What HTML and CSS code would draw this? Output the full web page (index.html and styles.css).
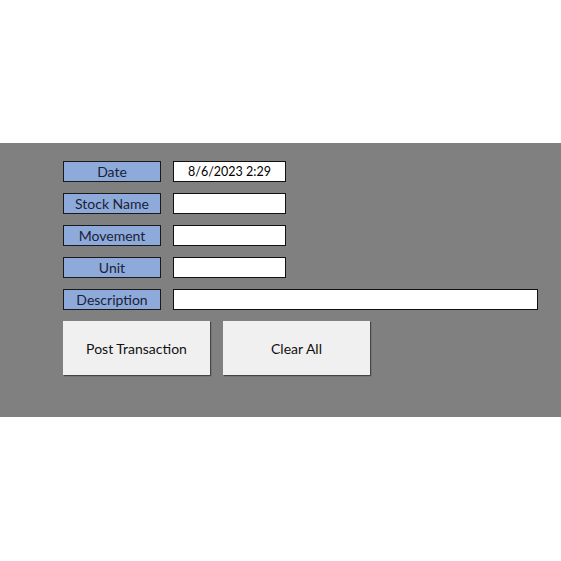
FILE: index.html
```html
<!DOCTYPE html>
<html>
<head>
<meta charset="utf-8">
<link rel="stylesheet" href="styles.css">
</head>
<body>
<div class="top"></div>
<div class="panel">
  <div class="row"><div class="label">Date</div><div class="field">8/6/2023 2:29</div></div>
  <div class="row"><div class="label">Stock Name</div><div class="field"></div></div>
  <div class="row"><div class="label">Movement</div><div class="field"></div></div>
  <div class="row"><div class="label">Unit</div><div class="field"></div></div>
  <div class="row"><div class="label">Description</div><div class="field wide"></div></div>
  <div class="buttons">
    <div class="btn">Post Transaction</div>
    <div class="btn">Clear All</div>
  </div>
</div>
</body>
</html>
```
FILE: styles.css
```css
html, body { margin: 0; padding: 0; background: #fff; }
body { font-family: Lato, "Open Sans", sans-serif; font-size: 14px; }
.top { height: 143px; }
.panel {
  background: #808080;
  height: 274px;
  box-sizing: border-box;
  padding: 18px 0 0 63px;
  display: flex;
  flex-direction: column;
  gap: 11px;
}
.row { display: flex; gap: 12px; height: 21px; }
.label {
  width: 98px; box-sizing: border-box;
  background: #8eaadb;
  border: 1px solid #1a1a1a;
  color: #1a2236;
  display: flex; align-items: center; justify-content: center;
}
.field {
  width: 113px; box-sizing: border-box;
  background: #fff;
  border: 1px solid #111;
  color: #000;
  font-size: 12.5px;
  display: flex; align-items: center; justify-content: center;
}
.field.wide { width: 365px; }
.buttons { display: flex; gap: 13px; }
.btn {
  width: 147px; height: 54px; box-sizing: border-box;
  background: #f0f0f0;
  box-shadow: 1px 1px 1px #444;
  color: #111;
  display: flex; align-items: center; justify-content: center;
}
```
